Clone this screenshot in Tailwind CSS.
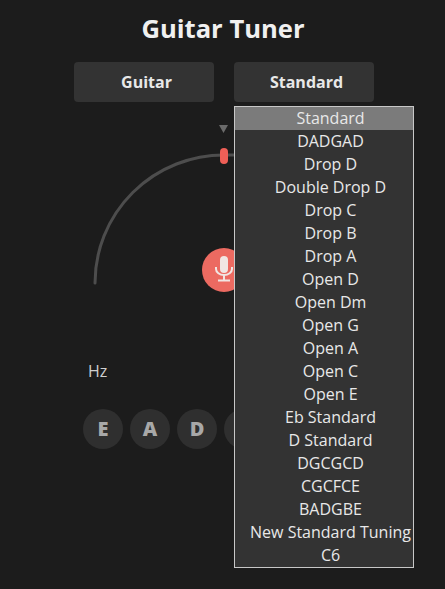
<!DOCTYPE html>
<html lang="en">

<head>
  <meta charset="UTF-8">
  <meta name="viewport" content="width=device-width, initial-scale=1.0">
  <title>Guitar Tuner</title>

  <script src="https://cdn.jsdelivr.net/npm/@tailwindcss/browser@4"></script>
</head>

<body class="bg-[#1c1c1c] font-['Open_Sans',sans-serif] text-[#e8e8e8]">
  <div class="relative h-[589px] w-[445px] overflow-hidden">
    <h1 class="pt-[12px] pl-[1px] text-center text-[25.6px] leading-[34px] font-bold text-[#f0f0f0]">Guitar Tuner</h1>

    <!-- selects -->
    <div class="mt-[16px] ml-[74px] flex gap-[20px]">
      <button class="h-[40px] w-[140px] rounded-[4px] bg-[#333333] pl-[5px] text-[16px] font-bold text-[#e8e8e8]">Guitar</button>
      <button class="h-[40px] w-[140px] rounded-[4px] bg-[#333333] pl-[5px] text-[16px] font-bold text-[#e8e8e8]">Standard</button>
    </div>

    <!-- gauge -->
    <div class="relative mt-[17px] ml-[84px] h-[190px] w-[280px]">
      <svg class="absolute top-0 left-0" width="280" height="190" viewBox="84 119 280 190" fill="none">
        <path d="M219 125 L228 125 L223.5 133 Z" fill="#6a6a6a" />
        <path d="M95 283 A129 128 0 0 1 224 155 L300 155" stroke="#4d4d4d" stroke-width="3" stroke-linecap="round" />
        <rect x="220" y="148" width="8" height="16" rx="4" fill="#ee5f57" />
      </svg>
      <div class="absolute top-[129px] left-[118px] flex h-[44px] w-[44px] items-center justify-center rounded-full bg-[#ec6a61]">
        <svg class="-ml-[1px]" width="24" height="30" viewBox="0 0 24 30" fill="none" stroke="#f1e6e3">
          <rect x="8" y="1" width="8" height="17" rx="4" fill="#f1e6e3" stroke="none" />
          <path d="M4 12 V14 A8 6 0 0 0 20 14 V12" stroke-width="2" />
          <path d="M12 20 V25 M6 25.5 H18" stroke-width="2" />
        </svg>
      </div>
    </div>

    <p class="mt-[51px] ml-[88px] text-[16px] leading-[22px] text-[#cfcfcf]">Hz</p>

    <!-- strings -->
    <div class="mt-[27px] ml-[83px] flex gap-[7px] text-[20px] font-extrabold text-[#a8a8a8]">
      <div class="flex h-[40px] w-[40px] items-center justify-center rounded-full bg-[#2f2f2f]">E</div>
      <div class="flex h-[40px] w-[40px] items-center justify-center rounded-full bg-[#2f2f2f]">A</div>
      <div class="flex h-[40px] w-[40px] items-center justify-center rounded-full bg-[#2f2f2f]">D</div>
      <div class="flex h-[40px] w-[40px] items-center justify-center rounded-full bg-[#2f2f2f]">G</div>
    </div>

    <!-- open dropdown -->
    <ul class="absolute top-[106px] left-[234px] w-[180px] border border-[#c8c8c8] bg-[#333333] text-center text-[16px] leading-[23px] whitespace-nowrap text-[#e8e8e8]">
      <li class="bg-[#7b7b7b] pl-[13px]">Standard</li>
      <li class="pl-[13px]">DADGAD</li>
      <li class="pl-[13px]">Drop D</li>
      <li class="pl-[13px]">Double Drop D</li>
      <li class="pl-[13px]">Drop C</li>
      <li class="pl-[13px]">Drop B</li>
      <li class="pl-[13px]">Drop A</li>
      <li class="pl-[13px]">Open D</li>
      <li class="pl-[13px]">Open Dm</li>
      <li class="pl-[13px]">Open G</li>
      <li class="pl-[13px]">Open A</li>
      <li class="pl-[13px]">Open C</li>
      <li class="pl-[13px]">Open E</li>
      <li class="pl-[13px]">Eb Standard</li>
      <li class="pl-[13px]">D Standard</li>
      <li class="pl-[13px]">DGCGCD</li>
      <li class="pl-[13px]">CGCFCE</li>
      <li class="pl-[13px]">BADGBE</li>
      <li class="pl-[13px]">New Standard Tuning</li>
      <li class="pl-[13px]">C6</li>
    </ul>
  </div>
</body>

</html>
